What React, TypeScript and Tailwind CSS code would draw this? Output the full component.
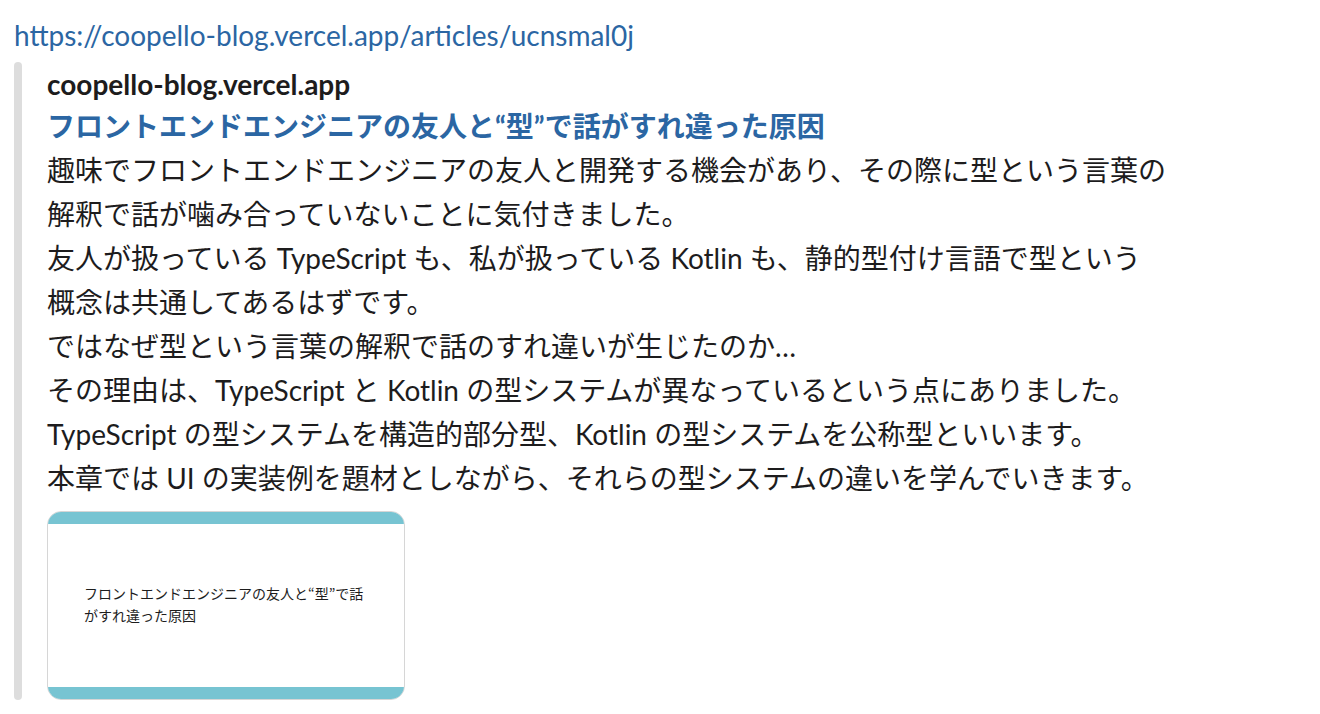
const FONT = "font-['Lato','Noto_Sans_CJK_JP',sans-serif]";

const BODY = [
  "趣味でフロントエンドエンジニアの友人と開発する機会があり、その際に型という言葉の",
  "解釈で話が噛み合っていないことに気付きました。",
  "友人が扱っている TypeScript も、私が扱っている Kotlin も、静的型付け言語で型という",
  "概念は共通してあるはずです。",
  "ではなぜ型という言葉の解釈で話のすれ違いが生じたのか…",
  "その理由は、TypeScript と Kotlin の型システムが異なっているという点にありました。",
  "TypeScript の型システムを構造的部分型、Kotlin の型システムを公称型といいます。",
  "本章では UI の実装例を題材としながら、それらの型システムの違いを学んでいきます。",
];

function OgImage() {
  return (
    <div className="w-[358px] h-[189px] rounded-[14px] border border-[#d6d6d6] overflow-hidden flex flex-col bg-white">
      <div className="h-[12px] bg-[#77c4d2]" />
      <div className="flex-1 flex items-center px-[36px] pb-[4px]">
        <p className="font-['Noto_Sans_CJK_JP',sans-serif] text-[14px] leading-[22px] text-[#1d1d1d]">
          フロントエンドエンジニアの友人と“型”で話
          <br />
          がすれ違った原因
        </p>
      </div>
      <div className="h-[12px] bg-[#77c4d2]" />
    </div>
  );
}

export default function App() {
  return (
    <div className={`${FONT} bg-white w-[1320px] h-[714px] overflow-hidden pl-[14px] pt-[14px]`}>
      <a className="block text-[#2b66a3] text-[28px] leading-[42px]">
        https://coopello-blog.vercel.app/articles/ucnsmal0j
      </a>
      <div className="flex mt-[6px]">
        <div className="w-[8px] rounded-full bg-[#dddddd] shrink-0" />
        <div className="pl-[25px] pt-[2px]">
          <div className="font-bold text-[#1d1c1d] text-[28px] leading-[40px]">
            coopello-blog.vercel.app
          </div>
          <div className="font-bold text-[#2b66a3] text-[28px] leading-[44px]">
            フロントエンドエンジニアの友人と“型”で話がすれ違った原因
          </div>
          <div className="text-[#1d1c1d] text-[28px] leading-[44px] whitespace-nowrap">
            {BODY.map((line) => (
              <div key={line}>{line}</div>
            ))}
          </div>
          <div className="mt-[11px]">
            <OgImage />
          </div>
        </div>
      </div>
    </div>
  );
}
